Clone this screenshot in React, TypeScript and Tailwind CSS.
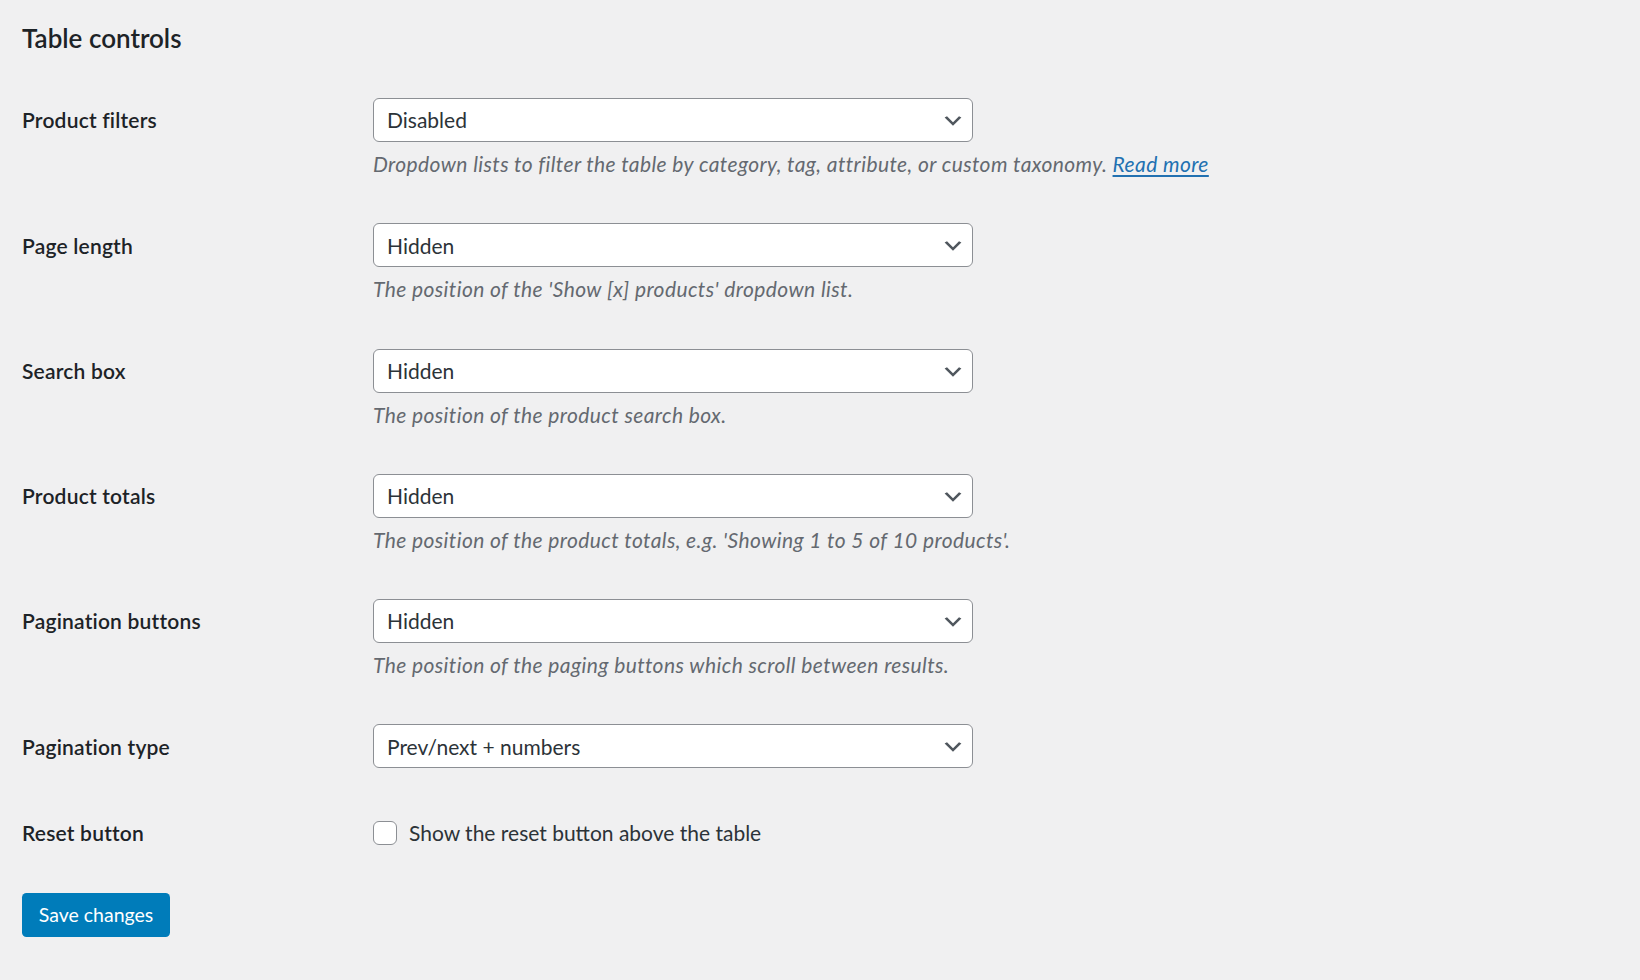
import { useState } from 'react'

interface SelectRow {
  label: string
  value: string
  options: string[]
  description?: React.ReactNode
}

const positions = ['Hidden', 'Above table', 'Below table', 'Above and below table']

const rows: SelectRow[] = [
  {
    label: 'Product filters',
    value: 'Disabled',
    options: ['Disabled', 'Show based on columns in table', 'Custom'],
    description: (
      <>
        Dropdown lists to filter the table by category, tag, attribute, or custom taxonomy.{' '}
        <a href="#" className="text-[#2271b1] underline underline-offset-[3px]">
          Read more
        </a>
      </>
    ),
  },
  {
    label: 'Page length',
    value: 'Hidden',
    options: positions,
    description: "The position of the 'Show [x] products' dropdown list.",
  },
  {
    label: 'Search box',
    value: 'Hidden',
    options: positions,
    description: 'The position of the product search box.',
  },
  {
    label: 'Product totals',
    value: 'Hidden',
    options: positions,
    description: "The position of the product totals, e.g. 'Showing 1 to 5 of 10 products'.",
  },
  {
    label: 'Pagination buttons',
    value: 'Hidden',
    options: positions,
    description: 'The position of the paging buttons which scroll between results.',
  },
  {
    label: 'Pagination type',
    value: 'Prev/next + numbers',
    options: ['Prev/next', 'Prev/next + numbers', 'Numbers only'],
  },
]

function Chevron() {
  return (
    <svg viewBox="0 0 20 20" className="pointer-events-none absolute right-[8px] top-[11px] h-[24px] w-[24px]">
      <path d="M5 6l5 5 5-5 2 1-7 7-7-7 2-1z" fill="#50575e" />
    </svg>
  )
}

function SettingSelect({ row, last }: { row: SelectRow; last?: boolean }) {
  const [value, setValue] = useState(row.value)

  return (
    <div className={last ? 'flex h-[44px]' : 'flex h-[125.3px]'}>
      <div className="flex h-[44px] w-[351px] shrink-0 items-center text-[21px] font-semibold tracking-[0.2px] text-[#1d2327]">
        {row.label}
      </div>
      <div>
        <div className="relative w-[600px]">
          <select
            value={value}
            onChange={(e) => setValue(e.target.value)}
            className="h-[44px] w-full appearance-none rounded-[6px] border-[1.5px] border-[#8c8f94] bg-white pl-[13px] pr-[36px] text-[21px] text-[#2c3338] outline-none"
          >
            {row.options.map((o) => (
              <option key={o}>{o}</option>
            ))}
          </select>
          <Chevron />
        </div>
        {row.description && (
          <p className="mt-[6px] text-[21px] italic leading-[31.5px] tracking-[0.4px] text-[#646970]">
            {row.description}
          </p>
        )}
      </div>
    </div>
  )
}

export default function App() {
  const [showReset, setShowReset] = useState(false)

  return (
    <div className="min-h-screen bg-[#f0f0f1] pl-[22px] text-[#1d2327]" style={{ fontFamily: 'Lato, "Noto Sans", sans-serif' }}>
      <h2 className="pt-[21px] text-[26px] font-semibold leading-[34px]">Table controls</h2>

      <div className="mt-[43px]">
        {rows.map((row, i) => (
          <SettingSelect key={row.label} row={row} last={i === rows.length - 1} />
        ))}
      </div>

      {/* Reset row */}
      <div className="mt-[28px] flex h-[73px] items-center">
        <div className="w-[351px] shrink-0 text-[21px] font-semibold tracking-[0.2px]">Reset button</div>
        <label className="flex cursor-pointer items-center gap-[12px] text-[21px] text-[#2c3338]">
          <input
            type="checkbox"
            checked={showReset}
            onChange={(e) => setShowReset(e.target.checked)}
            className="h-[24px] w-[24px] appearance-none rounded-[6px] border-[1.5px] border-[#8c8f94] bg-white"
          />
          Show the reset button above the table
        </label>
      </div>

      <button className="mt-[23.5px] h-[44px] w-[148px] rounded-[4.5px] bg-[#007cba] text-[19.5px] text-white">
        Save changes
      </button>
    </div>
  )
}
